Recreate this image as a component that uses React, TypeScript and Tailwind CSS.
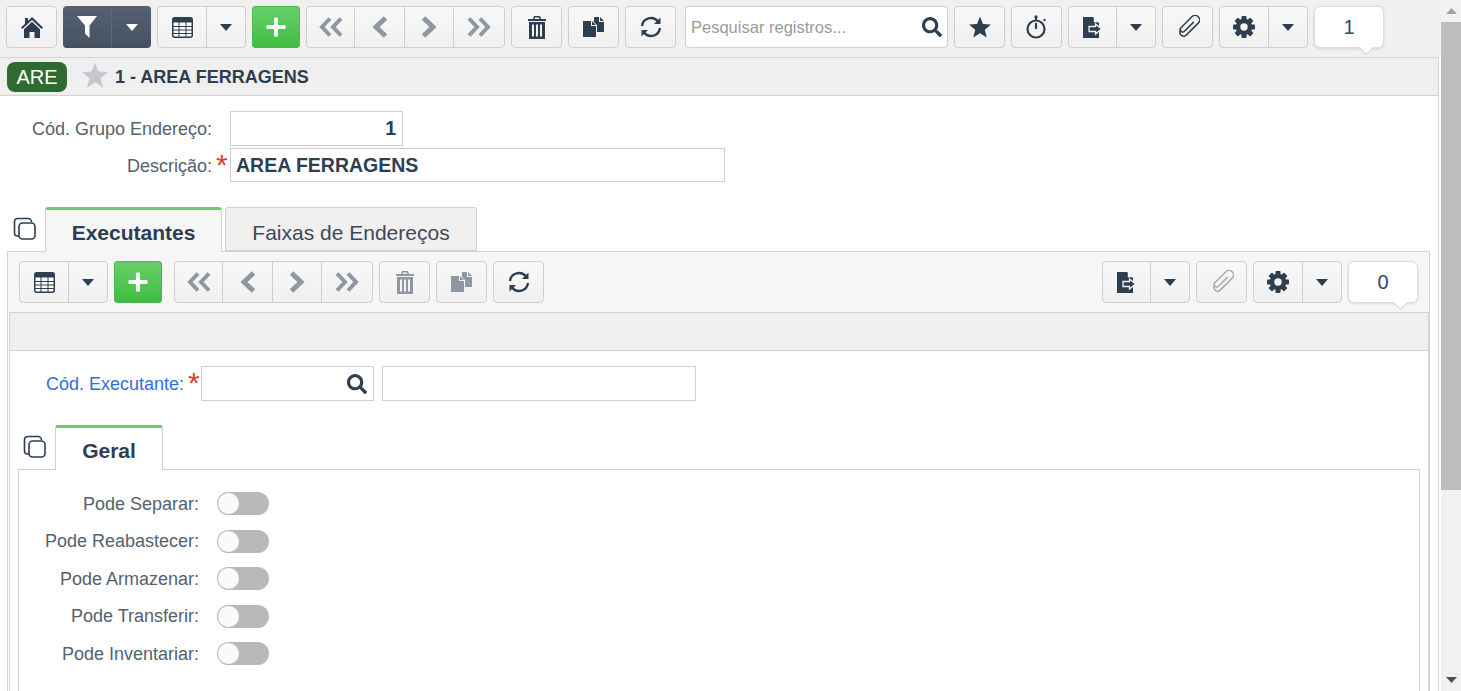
import React from "react";
import { FaPlus, FaSearch } from "react-icons/fa";

const NAVY = "#2c3e50";
const GREY = "#8f97a3";

function HomeIcon() {
  return (
    <svg width="22" height="21" viewBox="0 0 22 21" fill={NAVY}>
      <path d="M11 0 22 10.500 20.600 12 11 3 1.400 12 0 10.500 4 6.700V1h3v2.900z" />
      <path d="M11 4.800 19 12.200V21h-5.500v-6h-5v6H3v-8.800z" />
    </svg>
  );
}
function FilterIcon() {
  return (
    <svg width="20" height="22" viewBox="0 0 20 22" fill="#fff">
      <path d="M0 0h20l-7.500 9.500v12.500L8 17.500v-8z" />
    </svg>
  );
}
function StarIcon({ size, color }: { size: number; color: string }) {
  return (
    <svg width={size} height={size} viewBox="0 0 24 24" fill={color}>
      <path d="M12 0.500 15.200 8.800 24 9.300 17.200 15 19.400 23.500 12 18.800 4.600 23.500 6.800 15 0 9.300 8.800 8.800z" />
    </svg>
  );
}
function Chevron({ dir, double }: { dir: "l" | "r"; double?: boolean }) {
  const s = dir === "l" ? "-1" : "1";
  return (
    <svg width={double ? 24 : 16} height="22" viewBox={double ? "-12 -11 24 22" : "-8 -11 16 22"} fill="none" stroke={GREY} strokeWidth={double ? 4 : 5}>
      <g transform={`scale(${s} 1)`}>
        {double ? (
          <>
            <path d="M-10 -8.500 -2 0 -10 8.500" />
            <path d="M1 -8.500 9 0 1 8.500" />
          </>
        ) : (
          <path d="M-5.500 -9 4 0 -5.500 9" />
        )}
      </g>
    </svg>
  );
}
function GearIcon() {
  const teeth = [0, 45, 90, 135, 180, 225, 270, 315];
  return (
    <svg width="22" height="22" viewBox="-11 -11 22 22" fill={NAVY}>
      {teeth.map((a) => (
        <rect key={a} x="-2.500" y="-11" width="5" height="5" rx="0.800" transform={`rotate(${a})`} />
      ))}
      <circle r="6" fill="none" stroke={NAVY} strokeWidth="4.600" />
    </svg>
  );
}
function TableIcon() {
  return (
    <svg width="21" height="21" viewBox="0 0 21 21">
      <rect x="0.750" y="0.750" width="19.500" height="19.500" rx="2" fill="#fff" stroke={NAVY} strokeWidth="1.500" />
      <rect x="1" y="1" width="19" height="4.500" fill={NAVY} />
      <path d="M1 9.500H20M1 13H20M1 16.500H20M7 5V20M14 5V20" stroke={NAVY} strokeWidth="1" fill="none" />
    </svg>
  );
}
function TrashIcon({ color = NAVY }: { color?: string }) {
  return (
    <svg width="18" height="23" viewBox="0 0 18 23" fill={color}>
      <path d="M6 0h6l1 3h5v2H0V3h5zM7 1.400 6.600 3h4.800L11 1.400z" fillRule="evenodd" />
      <path d="M1 6h16v17H1zM4 8.500v12h2v-12zm4 0v12h2v-12zm4 0v12h2v-12z" fillRule="evenodd" />
    </svg>
  );
}
function CopyIcon({ color = NAVY }: { color?: string }) {
  return (
    <svg width="21" height="20" viewBox="0 0 21 20" fill={color}>
      <path d="M0 4h8v5h5v11H0z" />
      <path d="M9 4l4 4H9z" />
      <path d="M11 0h5v5h5v10h-7V8L10.500 4.500H11z" />
      <path d="M17 0l4 4h-4z" />
    </svg>
  );
}
function RefreshIcon() {
  return (
    <svg width="22" height="22" viewBox="0 0 22 22" fill="none" stroke={NAVY} strokeWidth="2.300">
      <path d="M2 10A9 9 0 0 1 18 5.500" />
      <path d="M20 12A9 9 0 0 1 4 16.500" />
      <path d="M20.500 1.500V8h-6.500z" fill={NAVY} stroke="none" />
      <path d="M1.500 20.500V14H8z" fill={NAVY} stroke="none" />
    </svg>
  );
}
function TimerIcon() {
  return (
    <svg width="22" height="24" viewBox="0 0 22 24" fill="none" stroke={NAVY}>
      <circle cx="10" cy="14" r="8.500" strokeWidth="2.200" />
      <path d="M10 8v6" strokeWidth="2.200" />
      <circle cx="10" cy="2" r="1.700" fill={NAVY} stroke="none" />
      <path d="M10 2v3" strokeWidth="2" />
      <circle cx="18.500" cy="5" r="1.200" fill={NAVY} stroke="none" />
    </svg>
  );
}
function ExportIcon() {
  return (
    <svg width="20" height="21" viewBox="0 0 20 21" className="-mr-[1px]">
      <path d="M0 0h10l6 6v15H0z" fill={NAVY} />
      <path d="M10.800 0.500v4.700h4.700z" fill="#fff" />
      <path d="M6 9.500h6.500V7l6 5-6 5v-2.500H6z" fill={NAVY} stroke="#f4f4f4" strokeWidth="1.300" />
    </svg>
  );
}
function ClipIcon({ color = NAVY }: { color?: string }) {
  return (
    <svg width="24" height="24" viewBox="-12 -12 24 24" fill="none" stroke={color} strokeWidth="1.500" strokeLinecap="round">
      <g transform="rotate(45)">
        <path d="M0.500 -6V6.500A2.500 2.500 0 0 1 -4.500 6.500V-9A4.500 4.500 0 0 1 4.500 -9V8A3.800 3.800 0 0 1 -3 8.500" transform="translate(0 -1)" />
      </g>
    </svg>
  );
}
function StackIcon() {
  return (
    <svg width="24" height="24" viewBox="0 0 24 24" fill="none" stroke={NAVY} strokeWidth="1.600">
      <rect x="6" y="6" width="16" height="16" rx="3.500" />
      <path d="M6 19H4.500A3 3 0 0 1 1.500 16V4.500A3 3 0 0 1 4.500 1.500H15A3.500 3.500 0 0 1 18.500 5" />
    </svg>
  );
}
function Caret({ color = NAVY }: { color?: string }) {
  return (
    <svg width="12" height="7" viewBox="0 0 12 7">
      <path d="M0 0h12L6 7z" fill={color} />
    </svg>
  );
}

function Btn({ w, children, cls = "" }: { w: string; children?: React.ReactNode; cls?: string }) {
  return <div className={`${w} h-full flex items-center justify-center ${cls}`}>{children}</div>;
}
function Group({ children, dark }: { children: React.ReactNode; dark?: boolean }) {
  return (
    <div
      className={
        dark
          ? "h-full flex rounded-[4px] bg-gradient-to-b from-[#566175] to-[#465160] divide-x divide-[#5c6778]"
          : "h-full flex rounded-[4px] border border-[#cfcfcf] bg-gradient-to-b from-[#f8f8f8] to-[#f0f0f0] divide-x divide-[#cfcfcf]"
      }
    >
      {children}
    </div>
  );
}
function PlusBtn() {
  return (
    <div className="w-[48px] h-full flex items-center justify-center rounded-[3px] border border-[#4cb854] bg-gradient-to-b from-[#67cf6b] to-[#3dbd41]">
      <FaPlus size={22} color="#fff" />
    </div>
  );
}
function Nav() {
  return (
    <Group>
      <Btn w="w-[48px]"><Chevron dir="l" double /></Btn>
      <Btn w="w-[50px]"><Chevron dir="l" /></Btn>
      <Btn w="w-[49px]"><Chevron dir="r" /></Btn>
      <Btn w="w-[50px]"><Chevron dir="r" double /></Btn>
    </Group>
  );
}
function Split({ icon, left = "w-[49px]" }: { icon: React.ReactNode; left?: string }) {
  return (
    <Group>
      <Btn w={left}>{icon}</Btn>
      <Btn w="w-[38px]"><Caret /></Btn>
    </Group>
  );
}
function Count({ n }: { n: string }) {
  return (
    <div className="relative w-[70px] h-full flex items-center justify-center rounded-[6px] bg-white border border-[#dcdcdc] text-[20px] text-[#2c4a6e] shadow-[0_1px_3px_rgba(0,0,0,0.12)]">
      {n}
      <div className="absolute left-[46px] -bottom-[6px] w-[11px] h-[11px] rotate-45 bg-white border-r border-b border-[#d4d4d4]" />
    </div>
  );
}
function Toggle({ label }: { label: string }) {
  return (
    <div className="h-[37.5px] flex items-center">
      <div className="w-[180px] pt-[1px] text-right text-[18px] text-[#54616e]">{label}:</div>
      <div className="ml-[18px] w-[52px] h-[23px] rounded-full bg-[#b9b9b9] p-[1px]">
        <div className="w-[21px] h-[21px] rounded-full bg-[#fafafa]" />
      </div>
    </div>
  );
}

export default function App() {
  return (
    <div className="w-[1461px] h-[691px] overflow-hidden flex bg-white font-['Liberation_Sans',Arial,sans-serif]">
      <div className="w-[1441px] h-full flex flex-col overflow-hidden">
        {/* main toolbar */}
        <div className="relative z-10 h-[57px] shrink-0 bg-[#f1f0ef] pt-[6px] pb-[9px] pl-[6px] flex gap-[6px]">
          <Group><Btn w="w-[49px]"><HomeIcon /></Btn></Group>
          <Group dark>
            <Btn w="w-[49px]"><FilterIcon /></Btn>
            <Btn w="w-[39px]"><Caret color="#fff" /></Btn>
          </Group>
          <Split icon={<TableIcon />} />
          <PlusBtn />
          <Nav />
          <Group><Btn w="w-[49px]"><TrashIcon /></Btn></Group>
          <Group><Btn w="w-[49px]"><CopyIcon /></Btn></Group>
          <Group><Btn w="w-[49px]"><RefreshIcon /></Btn></Group>
          <div className="ml-[3px] w-[263px] h-full flex items-center justify-between pl-[5px] pr-[5px] rounded-[4px] bg-white border border-[#cfcfcf] text-[16.500px] text-[#9a9a9a]">
            <span>Pesquisar registros...</span>
            <FaSearch size={20} color={NAVY} />
          </div>
          <Group><Btn w="w-[49px]"><StarIcon size={22} color={NAVY} /></Btn></Group>
          <Group><Btn w="w-[49px]"><TimerIcon /></Btn></Group>
          <Split icon={<ExportIcon />} left="w-[48px]" />
          <Group><Btn w="w-[49px]"><ClipIcon /></Btn></Group>
          <Split icon={<GearIcon />} />
          <Count n="1" />
        </div>

        {/* page panel */}
        <div className="flex-1 w-[1439px] border-r border-[#d4d4d4] flex flex-col min-h-0 bg-[#f1f0ef]">
          <div className="h-[39px] shrink-0 flex items-center border-y border-[#d4d4d4] bg-[#efefef] pl-[7px]">
            <div className="w-[60px] h-[30px] rounded-[8px] bg-[#2f6b30] text-white text-[20px] flex items-center justify-center">ARE</div>
            <div className="ml-[15px] mb-[4px]"><StarIcon size={26} color="#c3c7ce" /></div>
            <div className="ml-[7px] pt-[2px] text-[18px] font-bold text-[#2c3e50]">1 - AREA FERRAGENS</div>
          </div>

          <div className="flex-1 min-h-0 bg-white">
            {/* form */}
            <div className="pt-[15px] h-[111px] flex flex-col gap-[2px]">
              <div className="flex items-center h-[35px]">
                <div className="w-[212px] pt-[2px] text-right text-[18px] text-[#54616e]">Cód. Grupo Endereço:</div>
                <div className="ml-[18px] w-[173px] h-full border border-[#cfcfcf] flex items-center justify-end pr-[6px] text-[19.500px] font-bold text-[#2c3e50]">1</div>
              </div>
              <div className="flex items-center h-[34px]">
                <div className="w-[212px] pt-[2px] text-right text-[18px] text-[#54616e]">Descrição:</div>
                <div className="w-[18px] pl-[4px] h-full text-[30px] leading-[34px] text-[#d9432f]">*</div>
                <div className="w-[495px] h-full border border-[#cfcfcf] flex items-center pl-[5px] pt-[2px] text-[19.500px] font-bold text-[#2c3e50]">AREA FERRAGENS</div>
              </div>
            </div>

            {/* tabs */}
            <div className="h-[44px] flex items-end relative z-10 pl-[13px]">
              <div className="w-[32px] self-start pt-[10px]"><StackIcon /></div>
              <div className="w-[177px] h-[45px] -mb-[1px] border-x border-[#cfcfcf] border-t-[3px] border-t-[#65cf6a] rounded-t-[3px] bg-[#f6f6f6] flex items-center justify-center pt-[3px] text-[21px] font-bold text-[#2c3e50]">Executantes</div>
              <div className="ml-[3px] w-[252px] h-[44px] border border-[#cfcfcf] rounded-t-[3px] bg-[#f1f0ef] flex items-center justify-center pt-[7px] text-[21px] text-[#3c4a5a]">Faixas de Endereços</div>
            </div>

            <div className="ml-[7px] w-[1423px] border border-[#d4d4d4] h-[500px]">
              <div className="h-[60px] bg-[#f6f6f6] pt-[9px] pb-[9px] pl-[11px] pr-[11px] flex">
                <Split icon={<TableIcon />} />
                <div className="w-[6px]" />
                <PlusBtn />
                <div className="w-[12px]" />
                <Nav />
                <div className="w-[6px]" />
                <Group><Btn w="w-[49px]"><TrashIcon color={GREY} /></Btn></Group>
                <div className="w-[6px]" />
                <Group><Btn w="w-[49px]"><CopyIcon color={GREY} /></Btn></Group>
                <div className="w-[6px]" />
                <Group><Btn w="w-[49px]"><RefreshIcon /></Btn></Group>
                <div className="ml-auto flex gap-[6px]">
                  <Split icon={<ExportIcon />} left="w-[48px]" />
                  <Group><Btn w="w-[49px]"><ClipIcon color="#a5abb3" /></Btn></Group>
                  <Split icon={<GearIcon />} />
                  <Count n="0" />
                </div>
              </div>

              <div className="ml-[1px] w-[1420px] h-[440px] border-x border-[#d4d4d4]">
                <div className="h-[39px] border-y border-[#d4d4d4] bg-[#efefef]" />
                <div className="mt-[15px] flex items-center h-[35px]">
                  <div className="w-[174px] pt-[2px] text-right text-[18px] text-[#2f6fe0]">Cód. Executante:</div>
                  <div className="w-[17px] pl-[4px] h-full text-[30px] leading-[34px] text-[#d9432f]">*</div>
                  <div className="w-[173px] h-full border border-[#cfcfcf] flex items-center justify-end pr-[6px]"><FaSearch size={20} color={NAVY} /></div>
                  <div className="ml-[8px] w-[314px] h-full border border-[#cfcfcf]" />
                </div>

                <div className="mt-[24px] h-[44px] flex items-end relative z-10 pl-[13px]">
                  <div className="w-[32px] self-start pt-[10px]"><StackIcon /></div>
                  <div className="w-[108px] h-[45px] -mb-[1px] border-x border-[#cfcfcf] border-t-[3px] border-t-[#65cf6a] rounded-t-[3px] bg-white flex items-center justify-center pt-[3px] text-[21px] font-bold text-[#2c3e50]">Geral</div>
                </div>
                <div className="ml-[8px] w-[1402px] h-[300px] border border-[#cfcfcf] pt-[15px]">
                  <Toggle label="Pode Separar" />
                  <Toggle label="Pode Reabastecer" />
                  <Toggle label="Pode Armazenar" />
                  <Toggle label="Pode Transferir" />
                  <Toggle label="Pode Inventariar" />
                </div>
              </div>
            </div>
          </div>
        </div>
      </div>

      {/* scrollbar */}
      <div className="w-[20px] h-full flex flex-col bg-[#f1f1f1]">
        <div className="h-[22px] flex items-center justify-center"><svg width="11" height="6" viewBox="0 0 11 6"><path d="M0 6h11L5.500 0z" fill="#a3a3a3" /></svg></div>
        <div className="h-[468px] bg-[#bdbdbd]" />
        <div className="flex-1" />
        <div className="h-[22px] flex items-center justify-center"><svg width="11" height="6" viewBox="0 0 11 6"><path d="M0 0h11L5.500 6z" fill="#505050" /></svg></div>
      </div>
    </div>
  );
}
